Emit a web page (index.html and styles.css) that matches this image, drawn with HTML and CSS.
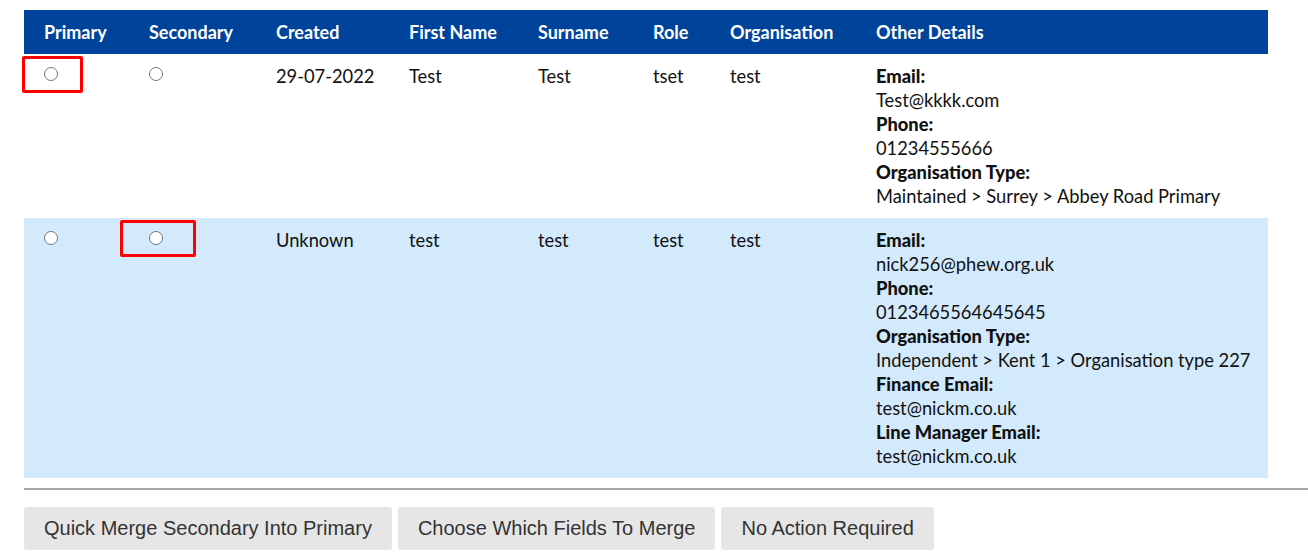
FILE: index.html
```html
<!DOCTYPE html>
<html>
<head>
<meta charset="utf-8">
<title>Merge Contacts</title>
<link rel="stylesheet" href="styles.css">
</head>
<body>

<div class="page">
	<table class="merge">
		<colgroup>
			<col class="c-primary">
			<col class="c-secondary">
			<col class="c-created">
			<col class="c-first">
			<col class="c-surname">
			<col class="c-role">
			<col class="c-org">
			<col class="c-details">
		</colgroup>
		<thead>
			<tr>
				<th>Primary</th>
				<th>Secondary</th>
				<th>Created</th>
				<th>First Name</th>
				<th>Surname</th>
				<th>Role</th>
				<th>Organisation</th>
				<th>Other Details</th>
			</tr>
		</thead>
		<tbody>
			<tr>
				<td class="pick"><span class="mark mark-a"></span><input type="radio" name="primary"></td>
				<td class="pick"><input type="radio" name="secondary"></td>
				<td>29-07-2022</td>
				<td>Test</td>
				<td>Test</td>
				<td>tset</td>
				<td>test</td>
				<td>
					<b>Email:</b><br>Test@kkkk.com<br>
					<b>Phone:</b><br>01234555666<br>
					<b>Organisation Type:</b><br>Maintained &gt; Surrey &gt; Abbey Road Primary
				</td>
			</tr>
			<tr class="alt">
				<td class="pick"><input type="radio" name="primary"></td>
				<td class="pick"><span class="mark mark-b"></span><input type="radio" name="secondary"></td>
				<td>Unknown</td>
				<td>test</td>
				<td>test</td>
				<td>test</td>
				<td>test</td>
				<td>
					<b>Email:</b><br>nick256@phew.org.uk<br>
					<b>Phone:</b><br>0123465564645645<br>
					<b>Organisation Type:</b><br>Independent &gt; Kent 1 &gt; Organisation type 227<br>
					<b>Finance Email:</b><br>test@nickm.co.uk<br>
					<b>Line Manager Email:</b><br>test@nickm.co.uk
				</td>
			</tr>
		</tbody>
	</table>

	<hr class="rule">

	<div class="actions">
		<button class="btn">Quick Merge Secondary Into Primary</button>
		<button class="btn">Choose Which Fields To Merge</button>
		<button class="btn">No Action Required</button>
	</div>
</div>

</body>
</html>
```

FILE: styles.css
```css
body {
  margin: 0;
  background: #fff;
  font-family: Lato, "Open Sans", sans-serif;
  color: #111;
}

.page {
  padding: 10px 0 0 24px;
}

/* table */
.merge {
  width: 1244px;
  border-collapse: collapse;
  table-layout: fixed;
  font-size: 18.3px;
}
.c-primary { width: 105px; }
.c-secondary { width: 127px; }
.c-created { width: 133px; }
.c-first { width: 129px; }
.c-surname { width: 115px; }
.c-role { width: 77px; }
.c-org { width: 146px; }
.c-details { width: 412px; }

.merge th {
  background: #00439a;
  color: #fff;
  font-weight: bold;
  font-size: 18px;
  text-align: left;
  padding: 10px 20px;
  line-height: 24px;
  white-space: nowrap;
}
.merge td {
  padding: 10px 20px 10px 20px;
  line-height: 24px;
  vertical-align: top;
  white-space: nowrap;
}
.merge tr.alt td {
  background: #d3eafc;
}
.merge td b {
  font-weight: 900;
}

.pick {
  position: relative;
}
.pick input {
  -webkit-appearance: none;
  appearance: none;
  display: block;
  width: 14px;
  height: 14px;
  margin: 3px 0 0 0;
  box-sizing: border-box;
  border: 1px solid #767676;
  border-radius: 50%;
  background: #fff;
}

/* red highlight boxes */
.mark {
  position: absolute;
  top: 2px;
  height: 37px;
  box-sizing: border-box;
  border: 3px solid #f00;
  border-radius: 2px;
}
.mark-a {
  left: -2px;
  width: 61px;
}
.mark-b {
  left: -9px;
  width: 76px;
}

.rule {
  margin: 10px 0 0 0;
  border: 0;
  border-top: 2px solid #a6a6a6;
}

/* buttons */
.actions {
  display: flex;
  gap: 6px;
  padding-top: 17px;
}
.btn {
  font-family: "Liberation Sans", Arial, sans-serif;
  font-size: 20px;
  color: #333;
  background: #e6e6e6;
  border: 0;
  border-radius: 3px;
  height: 43px;
  padding: 0 20px;
}
```
